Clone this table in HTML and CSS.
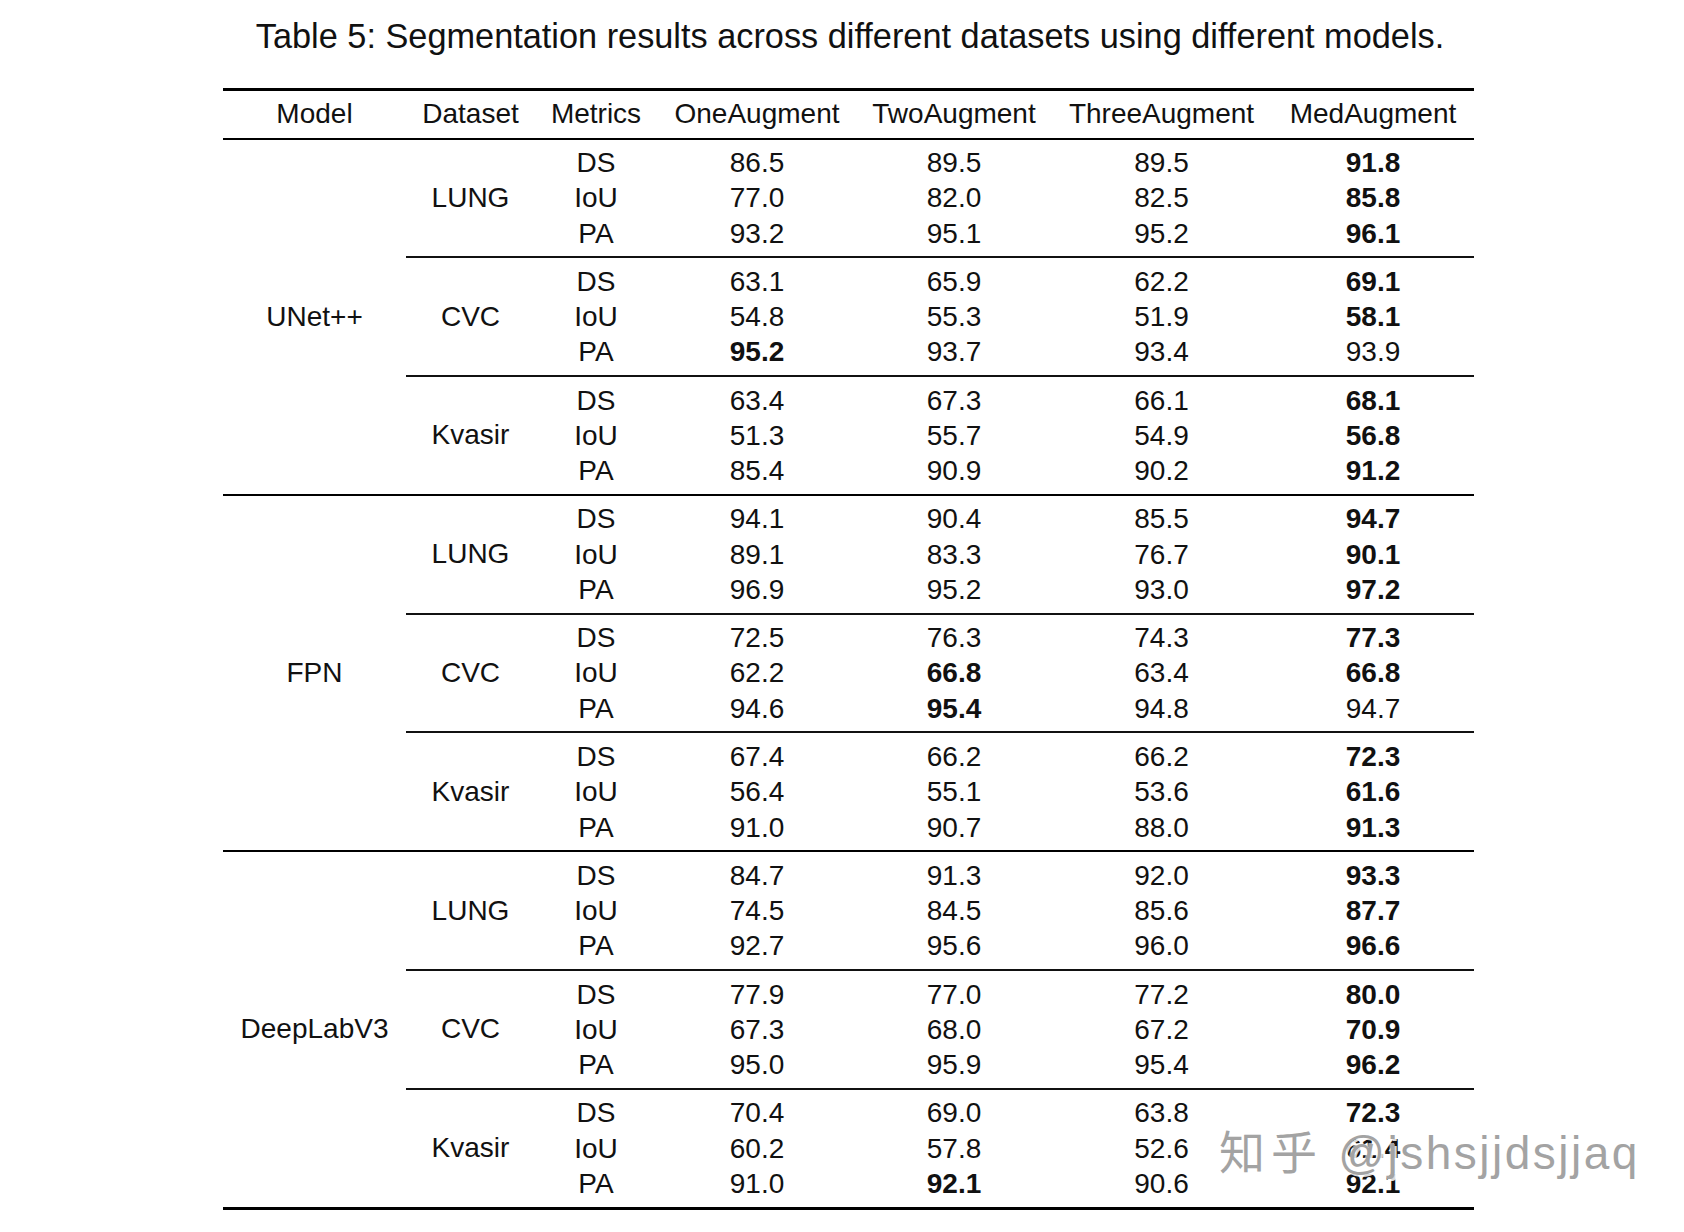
FILE: index.html
```html
<!DOCTYPE html>
<html>
<head>
<meta charset="utf-8">
<link rel="stylesheet" href="styles.css">
</head>
<body>
<div class="page">
  <div class="caption">Table 5: Segmentation results across different datasets using different models.</div>
  <div class="table">
    <div class="head">
      <div>Model</div><div>Dataset</div><div>Metrics</div><div>OneAugment</div><div>TwoAugment</div><div>ThreeAugment</div><div>MedAugment</div>
    </div>

    <div class="model">
      <div class="mname">UNet++</div>
      <div class="dsets">
        <div class="ds"><div class="dname">LUNG</div><div class="rows">
          <div class="row"><span>DS</span><span>86.5</span><span>89.5</span><span>89.5</span><span class="b">91.8</span></div>
          <div class="row"><span>IoU</span><span>77.0</span><span>82.0</span><span>82.5</span><span class="b">85.8</span></div>
          <div class="row"><span>PA</span><span>93.2</span><span>95.1</span><span>95.2</span><span class="b">96.1</span></div>
        </div></div>
        <div class="ds"><div class="dname">CVC</div><div class="rows">
          <div class="row"><span>DS</span><span>63.1</span><span>65.9</span><span>62.2</span><span class="b">69.1</span></div>
          <div class="row"><span>IoU</span><span>54.8</span><span>55.3</span><span>51.9</span><span class="b">58.1</span></div>
          <div class="row"><span>PA</span><span class="b">95.2</span><span>93.7</span><span>93.4</span><span>93.9</span></div>
        </div></div>
        <div class="ds"><div class="dname">Kvasir</div><div class="rows">
          <div class="row"><span>DS</span><span>63.4</span><span>67.3</span><span>66.1</span><span class="b">68.1</span></div>
          <div class="row"><span>IoU</span><span>51.3</span><span>55.7</span><span>54.9</span><span class="b">56.8</span></div>
          <div class="row"><span>PA</span><span>85.4</span><span>90.9</span><span>90.2</span><span class="b">91.2</span></div>
        </div></div>
      </div>
    </div>

    <div class="model">
      <div class="mname">FPN</div>
      <div class="dsets">
        <div class="ds"><div class="dname">LUNG</div><div class="rows">
          <div class="row"><span>DS</span><span>94.1</span><span>90.4</span><span>85.5</span><span class="b">94.7</span></div>
          <div class="row"><span>IoU</span><span>89.1</span><span>83.3</span><span>76.7</span><span class="b">90.1</span></div>
          <div class="row"><span>PA</span><span>96.9</span><span>95.2</span><span>93.0</span><span class="b">97.2</span></div>
        </div></div>
        <div class="ds"><div class="dname">CVC</div><div class="rows">
          <div class="row"><span>DS</span><span>72.5</span><span>76.3</span><span>74.3</span><span class="b">77.3</span></div>
          <div class="row"><span>IoU</span><span>62.2</span><span class="b">66.8</span><span>63.4</span><span class="b">66.8</span></div>
          <div class="row"><span>PA</span><span>94.6</span><span class="b">95.4</span><span>94.8</span><span>94.7</span></div>
        </div></div>
        <div class="ds"><div class="dname">Kvasir</div><div class="rows">
          <div class="row"><span>DS</span><span>67.4</span><span>66.2</span><span>66.2</span><span class="b">72.3</span></div>
          <div class="row"><span>IoU</span><span>56.4</span><span>55.1</span><span>53.6</span><span class="b">61.6</span></div>
          <div class="row"><span>PA</span><span>91.0</span><span>90.7</span><span>88.0</span><span class="b">91.3</span></div>
        </div></div>
      </div>
    </div>

    <div class="model">
      <div class="mname">DeepLabV3</div>
      <div class="dsets">
        <div class="ds"><div class="dname">LUNG</div><div class="rows">
          <div class="row"><span>DS</span><span>84.7</span><span>91.3</span><span>92.0</span><span class="b">93.3</span></div>
          <div class="row"><span>IoU</span><span>74.5</span><span>84.5</span><span>85.6</span><span class="b">87.7</span></div>
          <div class="row"><span>PA</span><span>92.7</span><span>95.6</span><span>96.0</span><span class="b">96.6</span></div>
        </div></div>
        <div class="ds"><div class="dname">CVC</div><div class="rows">
          <div class="row"><span>DS</span><span>77.9</span><span>77.0</span><span>77.2</span><span class="b">80.0</span></div>
          <div class="row"><span>IoU</span><span>67.3</span><span>68.0</span><span>67.2</span><span class="b">70.9</span></div>
          <div class="row"><span>PA</span><span>95.0</span><span>95.9</span><span>95.4</span><span class="b">96.2</span></div>
        </div></div>
        <div class="ds"><div class="dname">Kvasir</div><div class="rows">
          <div class="row"><span>DS</span><span>70.4</span><span>69.0</span><span>63.8</span><span class="b">72.3</span></div>
          <div class="row"><span>IoU</span><span>60.2</span><span>57.8</span><span>52.6</span><span class="b">61.4</span></div>
          <div class="row"><span>PA</span><span>91.0</span><span class="b">92.1</span><span>90.6</span><span class="b">92.1</span></div>
        </div></div>
      </div>
    </div>
  </div>
</div>
<div class="watermark"><span class="zh">知乎</span> @jshsjjdsjjaq</div>
</body>
</html>
```

FILE: styles.css
```css
html, body {
  margin: 0;
  padding: 0;
  background: #fff;
}
body {
  font-family: "Liberation Sans", Arial, Helvetica, sans-serif;
  color: #111;
  position: relative;
  width: 1684px;
  height: 1232px;
  overflow: hidden;
}
.page {
  width: 1251px;
  margin-left: 223px;
  padding-top: 16px;
}
.caption {
  font-size: 34.3px;
  line-height: 40px;
  text-align: center;
  margin-bottom: 32px;
  margin-left: 3px;
}
.table {
  border-top: 3px solid #000;
  border-bottom: 3px solid #000;
  font-size: 28px;
}
.head {
  display: grid;
  grid-template-columns: 183px 129px 122px 200px 194px 221px 202px;
  height: 46.5px;
  align-items: center;
  text-align: center;
  border-bottom: 2px solid #000;
}
.model {
  display: flex;
}
.model + .model {
  border-top: 2px solid #000;
}
.mname {
  width: 183px;
  flex: none;
  display: flex;
  align-items: center;
  justify-content: center;
}
.dsets {
  flex: 1;
  display: flex;
  flex-direction: column;
}
.ds {
  display: flex;
  padding: 5.5px 0;
}
.ds + .ds {
  border-top: 2px solid #111;
}
.dname {
  width: 129px;
  flex: none;
  display: flex;
  align-items: center;
  justify-content: center;
}
.rows {
  flex: 1;
  display: flex;
  flex-direction: column;
}
.row {
  display: grid;
  grid-template-columns: 122px 200px 194px 221px 202px;
  height: 35.28px;
  line-height: 35.28px;
  text-align: center;
}
.b {
  font-weight: bold;
}
.watermark {
  position: absolute;
  left: 1219px;
  top: 1121px;
  font-size: 46px;
  line-height: 56px;
  letter-spacing: 2.5px;
  color: #a3a3a3;
  white-space: nowrap;
  text-shadow: 2px 2px 0 rgba(255,255,255,0.85), -1px -1px 0 rgba(255,255,255,0.6);
}
.zh {
  font-family: "Noto Sans CJK SC", sans-serif;
  font-size: 46px;
  letter-spacing: 6px;
}
```
